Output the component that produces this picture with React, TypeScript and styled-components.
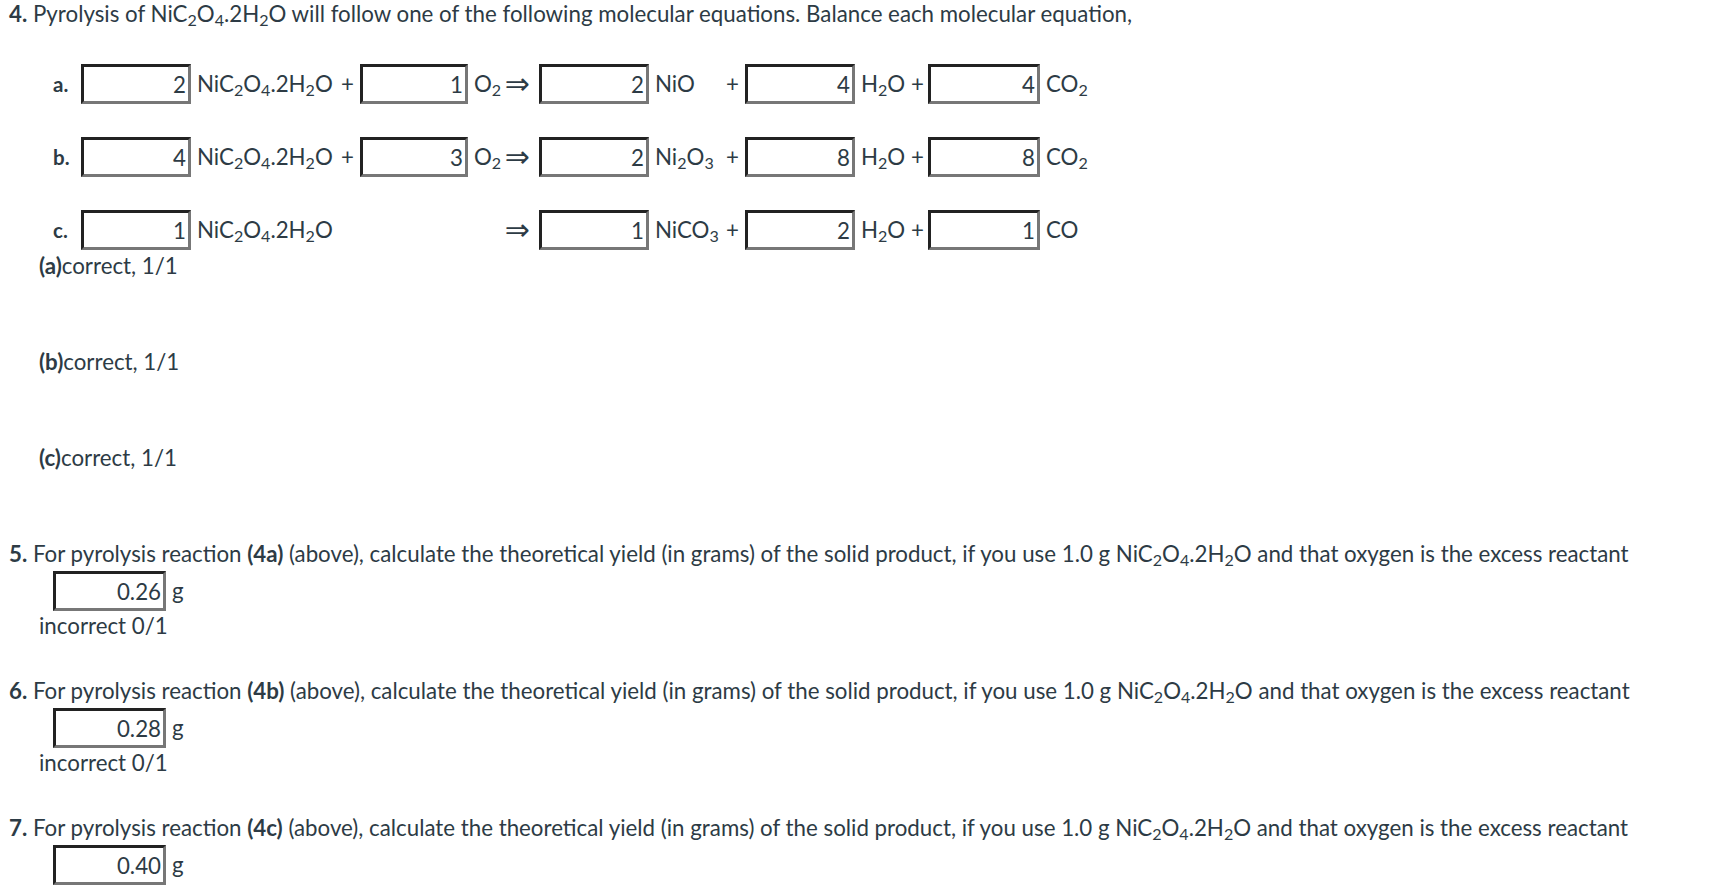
import React from "react";
import styled, { createGlobalStyle } from "styled-components";

const Global = createGlobalStyle`
  html, body { margin: 0; padding: 0; background: #fff; }
  body {
    font-family: Lato, "Open Sans", sans-serif;
    font-size: 22.3px;
    color: #2d3b45;
    line-height: 24px;
  }
`;

const Page = styled.div`
  padding: 2px 0 0 9px;
`;

const Heading = styled.div`
  white-space: nowrap;
`;

const B = styled.b`
  font-weight: 700;
`;

const Sub = styled.sub`
  font-size: 0.72em;
  line-height: 0;
  vertical-align: -0.22em;
`;

const EqGrid = styled.div`
  display: grid;
  grid-template-columns: 28px 110px 169px 108px 71px 110px 96px 110px 73px 112px auto;
  grid-auto-rows: 40px;
  row-gap: 33px;
  align-items: center;
  margin: 38px 0 0 44px;
`;

const Label = styled.span`
  font-weight: 700;
  font-size: 20.5px;
`;

const Box = styled.input<{ $w?: number }>`
  box-sizing: border-box;
  width: ${(p) => p.$w ?? 110}px;
  height: 40px;
  margin: 0;
  padding: 0 2px 0 0;
  border-style: solid;
  border-width: 3px;
  border-color: #222222 #777777 #777777 #222222;
  background: #fff;
  font-family: Lato, "Open Sans", sans-serif;
  font-size: 22.3px;
  color: #2d3b45;
  text-align: right;
  outline: none;
`;

const Species = styled.span<{ $pad?: number }>`
  display: flex;
  justify-content: space-between;
  align-items: center;
  padding: 0 ${(p) => p.$pad ?? 6}px 0 6px;
  white-space: nowrap;
`;

const Arrow = styled.span`
  font-family: "DejaVu Sans", sans-serif;
  font-size: 30px;
  line-height: 24px;
`;

const Feedback = styled.div`
  margin-left: 30px;
  height: 24px;
  margin-bottom: 72px;
`;

const FirstFeedback = styled(Feedback)`
  margin-top: 4px;
`;

const Question = styled.div`
  white-space: nowrap;
`;

const AnswerRow = styled.div`
  display: flex;
  align-items: center;
  gap: 6px;
  margin: 5px 0 0 44px;
`;

const Result = styled.div`
  margin: 3px 0 0 30px;
  height: 24px;
  margin-bottom: 41px;
`;

const Hydrate = () => (
  <>
    NiC<Sub>2</Sub>O<Sub>4</Sub>.2H<Sub>2</Sub>O
  </>
);

const H2O = () => (
  <>
    H<Sub>2</Sub>O
  </>
);

type Row = {
  label: string;
  c: number[];
  s1: React.ReactNode;
  p1: string;
  s2: React.ReactNode;
  s3: React.ReactNode;
  s5: React.ReactNode;
};

const rows: Row[] = [
  {
    label: "a.",
    c: [2, 1, 2, 4, 4],
    s1: <Hydrate />,
    p1: "+",
    s2: (
      <>
        O<Sub>2</Sub>
      </>
    ),
    s3: <>NiO</>,
    s5: (
      <>
        CO<Sub>2</Sub>
      </>
    ),
  },
  {
    label: "b.",
    c: [4, 3, 2, 8, 8],
    s1: <Hydrate />,
    p1: "+",
    s2: (
      <>
        O<Sub>2</Sub>
      </>
    ),
    s3: (
      <>
        Ni<Sub>2</Sub>O<Sub>3</Sub>
      </>
    ),
    s5: (
      <>
        CO<Sub>2</Sub>
      </>
    ),
  },
  {
    label: "c.",
    c: [1, 0, 1, 2, 1],
    s1: <Hydrate />,
    p1: "",
    s2: null,
    s3: (
      <>
        NiCO<Sub>3</Sub>
      </>
    ),
    s5: <>CO</>,
  },
];

const questions = [
  { n: "5.", r: "(4a)", v: "0.26", res: "incorrect 0/1" },
  { n: "6.", r: "(4b)", v: "0.28", res: "incorrect 0/1" },
  { n: "7.", r: "(4c)", v: "0.40", res: "" },
];

export default function App() {
  return (
    <Page>
      <Global />
      <Heading>
        <B>4.</B> Pyrolysis of <Hydrate /> will follow one of the following molecular equations. Balance
        each molecular equation,
      </Heading>
      <EqGrid>
        {rows.map((r) => (
          <React.Fragment key={r.label}>
            <Label>{r.label}</Label>
            <Box readOnly value={String(r.c[0])} />
            <Species>
              <span>{r.s1}</span>
              <span>{r.p1}</span>
            </Species>
            {r.s2 !== null ? (
              <Box readOnly value={String(r.c[1])} $w={108} />
            ) : (
              <span />
            )}
            <Species $pad={9}>
              <span>{r.s2}</span>
              <Arrow>⇒</Arrow>
            </Species>
            <Box readOnly value={String(r.c[2])} />
            <Species>
              <span>{r.s3}</span>
              <span>+</span>
            </Species>
            <Box readOnly value={String(r.c[3])} />
            <Species $pad={4}>
              <span>
                <H2O />
              </span>
              <span>+</span>
            </Species>
            <Box readOnly value={String(r.c[4])} $w={112} />
            <Species $pad={0}>
              <span>{r.s5}</span>
            </Species>
          </React.Fragment>
        ))}
      </EqGrid>
      <FirstFeedback>
        <B>(a)</B>correct, 1/1
      </FirstFeedback>
      <Feedback>
        <B>(b)</B>correct, 1/1
      </Feedback>
      <Feedback>
        <B>(c)</B>correct, 1/1
      </Feedback>
      {questions.map((q) => (
        <div key={q.n}>
          <Question>
            <B>{q.n}</B> For pyrolysis reaction <B>{q.r}</B> (above), calculate the theoretical yield (in
            grams) of the solid product, if you use 1.0 g <Hydrate /> and that oxygen is the excess reactant
          </Question>
          <AnswerRow>
            <Box readOnly value={q.v} $w={113} />
            <span>g</span>
          </AnswerRow>
          {q.res && <Result>{q.res}</Result>}
        </div>
      ))}
    </Page>
  );
}
